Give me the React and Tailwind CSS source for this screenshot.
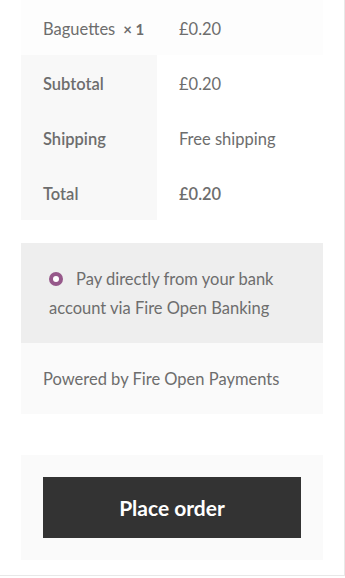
import React from "react";

const rows = [
  { label: "Subtotal", value: "£0.20" },
  { label: "Shipping", value: "Free shipping" },
  { label: "Total", value: "£0.20", bold: true },
];

export default function App() {
  return (
    <div
      className="w-[345px] h-[576px] bg-white border-r border-b border-[#e8e8e8] px-[21px] text-[#6d6d6d] text-[16.5px]"
      style={{ fontFamily: "Lato, 'Liberation Sans', sans-serif" }}
    >
      {/* Order review table */}
      <table className="w-full border-collapse">
        <tbody>
          <tr className="bg-[#fdfdfd] h-[55px]">
            <td className="w-[136px] pl-[22px] pt-[3px] align-middle whitespace-nowrap">
              Baguettes <strong className="font-bold text-[15px]">&nbsp;× 1</strong>
            </td>
            <td className="pl-[22px] pt-[3px] align-middle">£0.20</td>
          </tr>
        </tbody>
        <tfoot>
          {rows.map((r) => (
            <tr key={r.label} className="h-[55px]">
              <th className="w-[136px] bg-[#f8f8f8] pl-[22px] pt-[3px] text-left font-semibold align-middle">
                {r.label}
              </th>
              <td className={"pl-[22px] pt-[3px] align-middle " + (r.bold ? "font-semibold" : "")}>
                {r.value}
              </td>
            </tr>
          ))}
        </tfoot>
      </table>

      {/* Payment method */}
      <div className="mt-[23px]">
        <div className="bg-[#eeeeee] h-[100px] pl-[28px] pr-[22px] pt-[22px] leading-[29px]">
          <span className="inline-block align-middle mr-[13px] -mt-[4px]">
            <span className="w-[14px] h-[14px] rounded-full bg-[#96588a] flex items-center justify-center">
              <span className="w-[6px] h-[6px] rounded-full bg-white"></span>
            </span>
          </span>
          Pay directly from your bank account via Fire Open Banking
        </div>
        <div className="bg-[#fafafa] h-[71px] flex items-center pl-[22px] pt-[2px]">
          Powered by Fire Open Payments
        </div>
      </div>

      {/* Place order */}
      <div className="mt-[41px] bg-[#fafafa] p-[22px]">
        <button className="w-full h-[61px] bg-[#333333] text-white font-bold text-[21px]">
          Place order
        </button>
      </div>
    </div>
  );
}
